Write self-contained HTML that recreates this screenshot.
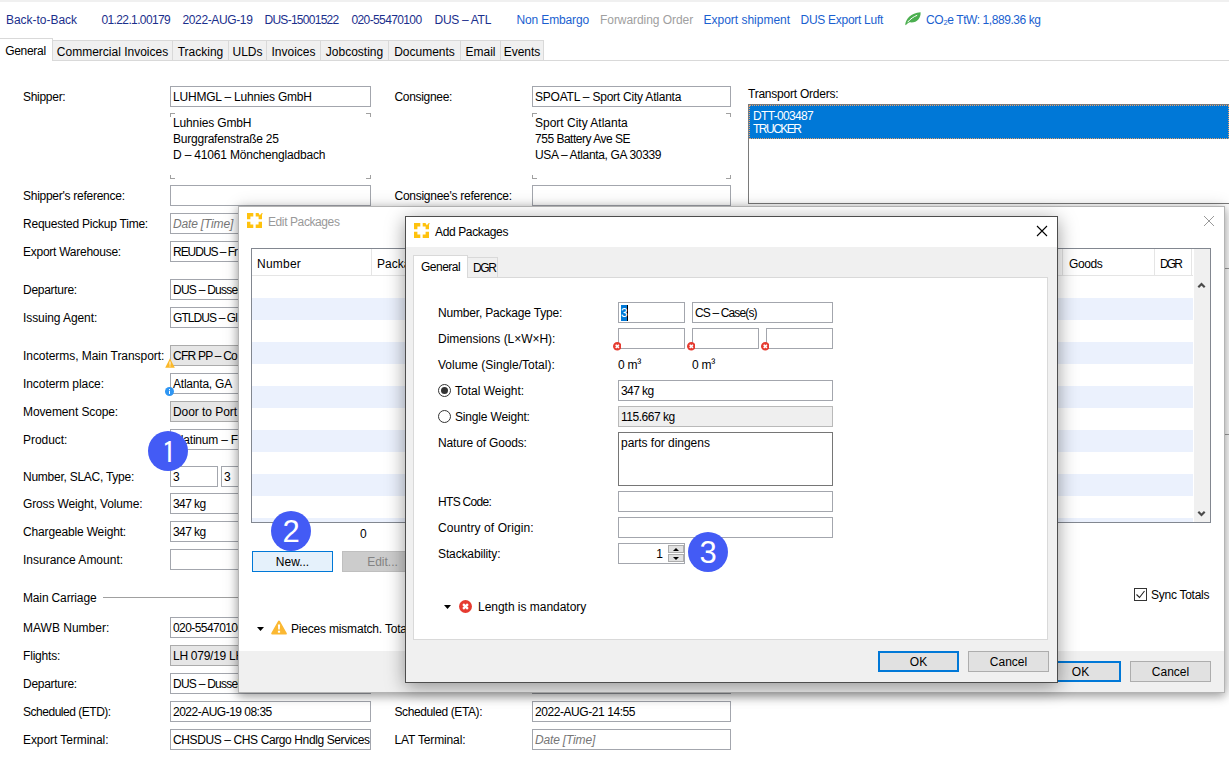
<!DOCTYPE html>
<html><head><meta charset="utf-8"><title>Shipment</title>
<style>
*{box-sizing:border-box}
html,body{margin:0;padding:0}
body{width:1229px;height:761px;overflow:hidden;background:#fff;position:relative;font:12px/14px "Liberation Sans",sans-serif;color:#000}
.a{position:absolute;white-space:nowrap}
.t{position:absolute;white-space:nowrap;height:14px;line-height:14px}
.in{position:absolute;height:21px;border:1px solid #a3a6ad;background:#fff;padding:0 0 0 2px;line-height:20px;white-space:nowrap;overflow:hidden}
.in.g{background:#e6e6e6;border-color:#ababab}
.in.ph{color:#767676;font-style:italic}
.nv{color:#1b2f8c}
.lk{color:#1a5fd0}
.tab{position:absolute;top:40px;height:21px;background:#f0f0f0;border:1px solid #d9d9d9;border-left:none;line-height:22px;text-align:center}
.btn{position:absolute;height:21px;border:1px solid #adadad;background:#e1e1e1;text-align:center;line-height:21px}
.circ{position:absolute;width:40px;height:40px;border-radius:50%;background:#435bf5;color:#fff;font-size:31px;line-height:42px;text-align:center}
</style></head><body>
<div id="hdr">
<div class="a" style="left:0;top:0;width:1229px;height:2px;background:#f0f0f0"></div>
<span class="t nv" style="left:6px;top:13px;letter-spacing:-0.03px;">Back-to-Back</span>
<span class="t nv" style="left:101.5px;top:13px;letter-spacing:-0.63px;">01.22.1.00179</span>
<span class="t nv" style="left:182.5px;top:13px;letter-spacing:-0.37px;">2022-AUG-19</span>
<span class="t nv" style="left:264.5px;top:13px;letter-spacing:-0.73px;">DUS-15001522</span>
<span class="t nv" style="left:351.5px;top:13px;letter-spacing:-0.57px;letter-spacing:-0.62px;">020-55470100</span>
<span class="t nv" style="left:434.5px;top:13px;letter-spacing:-0.29px;">DUS – ATL</span>
<span class="t lk" style="left:516.5px;top:13px;letter-spacing:-0.14px;">Non Embargo</span>
<span class="t " style="left:600px;top:13px;letter-spacing:-0.06px;color:#a0a0a0;">Forwarding Order</span>
<span class="t lk" style="left:703.5px;top:13px;letter-spacing:-0.01px;">Export shipment</span>
<span class="t lk" style="left:800.5px;top:13px;letter-spacing:-0.28px;">DUS Export Luft</span>
<span class="t lk" style="left:926px;top:13px;letter-spacing:-0.43px;">CO₂e TtW: 1,889.36 kg</span>
<svg class="a" style="left:904px;top:11px" width="18" height="15" viewBox="0 0 18 15"><path d="M1.2 13.6C2.200 7.500 6.500 2.500 16.6 1.300 16.900 7.800 12.500 12.300 5.600 11.300 4.200 11.900 2.800 13 1.900 14.200z" fill="#4caf50"/><path d="M3.600 11.200C6.500 7.800 9.800 5.600 13.200 4.300" stroke="#fff" stroke-width="1" fill="none"/></svg>
<div class="a" style="left:0;top:60px;width:1229px;height:1px;background:#d9d9d9"></div>
<div class="tab" style="left:-1px;top:38px;width:54px;height:23px;background:#fff;border-left:1px solid #d9d9d9;border-bottom:none;line-height:24px;letter-spacing:-0.3px;padding-right:1px">General</div>
<div class="tab" style="left:53px;width:120px">Commercial Invoices</div>
<div class="tab" style="left:173px;width:56px">Tracking</div>
<div class="tab" style="left:229px;width:38px">ULDs</div>
<div class="tab" style="left:267px;width:54px">Invoices</div>
<div class="tab" style="left:321px;width:68px">Jobcosting</div>
<div class="tab" style="left:389px;width:72px">Documents</div>
<div class="tab" style="left:461px;width:40px">Email</div>
<div class="tab" style="left:501px;width:43px">Events</div>
</div>
<div id="form">
<span class="t " style="left:23px;top:90px;letter-spacing:-0.286px;">Shipper:</span>
<div class="in " style="left:170px;top:86px;width:201px;letter-spacing:-0.198px;">LUHMGL – Luhnies GmbH</div>
<span class="t " style="left:23px;top:189px;letter-spacing:-0.264px;">Shipper's reference:</span>
<div class="in " style="left:170px;top:185px;width:201px;"></div>
<span class="t " style="left:23px;top:217px;letter-spacing:-0.232px;">Requested Pickup Time:</span>
<div class="in ph" style="left:170px;top:213px;width:201px;letter-spacing:-0.162px;">Date [Time]</div>
<span class="t " style="left:23px;top:245px;letter-spacing:-0.255px;">Export Warehouse:</span>
<div class="in " style="left:170px;top:241px;width:201px;letter-spacing:-1.03px;">REUDUS – Fr</div>
<span class="t " style="left:23px;top:283px;letter-spacing:-0.278px;">Departure:</span>
<div class="in " style="left:170px;top:279px;width:201px;letter-spacing:-0.75px;">DUS – Dusseldorf</div>
<span class="t " style="left:23px;top:311px;letter-spacing:-0.084px;">Issuing Agent:</span>
<div class="in " style="left:170px;top:307px;width:201px;letter-spacing:-0.91px;">GTLDUS – Gl</div>
<span class="t " style="left:23px;top:349px;letter-spacing:-0.057px;">Incoterms, Main Transport:</span>
<div class="in g" style="left:170px;top:345px;width:201px;letter-spacing:-0.77px;">CFR PP – Co</div>
<span class="t " style="left:23px;top:377px;letter-spacing:-0.075px;">Incoterm place:</span>
<div class="in " style="left:170px;top:373px;width:201px;letter-spacing:-0.217px;">Atlanta, GA</div>
<span class="t " style="left:23px;top:405px;letter-spacing:-0.108px;">Movement Scope:</span>
<div class="in g" style="left:170px;top:401px;width:201px;letter-spacing:-0.06px;">Door to Port</div>
<span class="t " style="left:23px;top:433px;letter-spacing:-0.043px;">Product:</span>
<div class="in " style="left:170px;top:429px;width:201px;letter-spacing:-0.2px;">Platinum – F</div>
<span class="t " style="left:23px;top:497px;letter-spacing:-0.15px;">Gross Weight, Volume:</span>
<div class="in " style="left:170px;top:493px;width:201px;letter-spacing:-0.566px;">347 kg</div>
<span class="t " style="left:23px;top:525px;letter-spacing:-0.156px;">Chargeable Weight:</span>
<div class="in " style="left:170px;top:521px;width:201px;letter-spacing:-0.566px;">347 kg</div>
<span class="t " style="left:23px;top:553px;">Insurance Amount:</span>
<div class="in " style="left:170px;top:549px;width:201px;"></div>
<span class="t " style="left:23px;top:621px;">MAWB Number:</span>
<div class="in " style="left:170px;top:617px;width:201px;letter-spacing:-0.57px;">020-55470100</div>
<span class="t " style="left:23px;top:649px;letter-spacing:-0.184px;">Flights:</span>
<div class="in g" style="left:170px;top:645px;width:201px;letter-spacing:-0.27px;">LH 079/19 LH</div>
<span class="t " style="left:23px;top:677px;letter-spacing:-0.278px;">Departure:</span>
<div class="in " style="left:170px;top:673px;width:201px;letter-spacing:-0.75px;">DUS – Dusseldorf</div>
<span class="t " style="left:23px;top:705px;letter-spacing:-0.478px;">Scheduled (ETD):</span>
<div class="in " style="left:170px;top:701px;width:201px;letter-spacing:-0.507px;">2022-AUG-19 08:35</div>
<span class="t " style="left:23px;top:733px;letter-spacing:-0.066px;">Export Terminal:</span>
<div class="in " style="left:170px;top:729px;width:201px;letter-spacing:-0.388px;">CHSDUS – CHS Cargo Hndlg Services</div>
<span class="t " style="left:23px;top:470px;letter-spacing:-0.252px;">Number, SLAC, Type:</span>
<div class="in" style="left:170px;top:466px;width:48px">3</div>
<div class="in" style="left:221px;top:466px;width:48px">3</div>
<span class="t " style="left:173px;top:116px;letter-spacing:-0.141px;">Luhnies GmbH</span>
<span class="t " style="left:173px;top:132px;letter-spacing:-0.226px;">Burggrafenstraße 25</span>
<span class="t " style="left:173px;top:148px;letter-spacing:-0.179px;">D – 41061 Mönchengladbach</span>
<div class="a" style="left:170px;top:113px;width:5px;height:4px;border-left:1px solid #a0a0a0;border-top:1px solid #a0a0a0"></div>
<div class="a" style="left:366px;top:113px;width:5px;height:4px;border-right:1px solid #a0a0a0;border-top:1px solid #a0a0a0"></div>
<div class="a" style="left:170px;top:175px;width:5px;height:4px;border-left:1px solid #a0a0a0;border-bottom:1px solid #a0a0a0"></div>
<div class="a" style="left:366px;top:175px;width:5px;height:4px;border-right:1px solid #a0a0a0;border-bottom:1px solid #a0a0a0"></div>
<span class="t " style="left:535px;top:116px;">Sport City Atlanta</span>
<span class="t " style="left:535px;top:132px;letter-spacing:-0.486px;">755 Battery Ave SE</span>
<span class="t " style="left:535px;top:148px;letter-spacing:-0.346px;">USA – Atlanta, GA 30339</span>
<div class="a" style="left:532px;top:113px;width:5px;height:4px;border-left:1px solid #a0a0a0;border-top:1px solid #a0a0a0"></div>
<div class="a" style="left:726px;top:113px;width:5px;height:4px;border-right:1px solid #a0a0a0;border-top:1px solid #a0a0a0"></div>
<div class="a" style="left:532px;top:175px;width:5px;height:4px;border-left:1px solid #a0a0a0;border-bottom:1px solid #a0a0a0"></div>
<div class="a" style="left:726px;top:175px;width:5px;height:4px;border-right:1px solid #a0a0a0;border-bottom:1px solid #a0a0a0"></div>
<span class="t " style="left:23px;top:591px;letter-spacing:-0.148px;">Main Carriage</span>
<div class="a" style="left:103px;top:597px;width:640px;height:1px;background:#a0a0a0"></div>
<span class="t " style="left:394.5px;top:90px;letter-spacing:-0.313px;">Consignee:</span>
<div class="in " style="left:532px;top:86px;width:199px;letter-spacing:-0.218px;">SPOATL – Sport City Atlanta</div>
<span class="t " style="left:394.5px;top:189px;letter-spacing:-0.263px;">Consignee's reference:</span>
<div class="in " style="left:532px;top:185px;width:199px;"></div>
<div class="in " style="left:532px;top:673px;width:199px;"></div>
<span class="t " style="left:394.5px;top:705px;letter-spacing:-0.389px;">Scheduled (ETA):</span>
<div class="in " style="left:532px;top:701px;width:199px;letter-spacing:-0.432px;">2022-AUG-21 14:55</div>
<span class="t " style="left:394.5px;top:733px;letter-spacing:-0.142px;">LAT Terminal:</span>
<div class="in ph" style="left:532px;top:729px;width:199px;letter-spacing:-0.162px;">Date [Time]</div>
<span class="t " style="left:748px;top:87px;letter-spacing:-0.234px;">Transport Orders:</span>
<div class="a" style="left:748px;top:104px;width:490px;height:100px;border:1px solid #7a7a7a;background:#fff"></div>
<div class="a" style="left:749px;top:105px;width:480px;height:34px;background:#0078d7;border:1px dotted #e8a06a;color:#fff;font-size:12px;line-height:13px;padding:4px 0 0 3px"><span style="letter-spacing:-0.66px">DTT-003487</span><br><span style="letter-spacing:-1.5px">TRUCKER</span></div>
<svg class="a" style="left:165px;top:358px" width="10" height="10" viewBox="0 0 10 10"><path d="M5 0.300L9.800 9.700H0.200z" fill="#fbb829"/><path d="M4.500 3.500h1v3.300h-1zM4.500 7.500h1v1h-1z" fill="#fff"/></svg>
<svg class="a" style="left:165px;top:387px" width="9" height="9" viewBox="0 0 9 9"><circle cx="4.500" cy="4.500" r="4.500" fill="#2f96f3"/><path d="M4 3.800h1v3.200h-1zM4 2h1v1h-1z" fill="#fff"/></svg>
<div class="a" style="left:1225px;top:268px;width:4px;height:1px;background:#a0a0a0"></div>
<div class="a" style="left:1225px;top:434px;width:4px;height:1px;background:#a0a0a0"></div>
</div>
<div id="dlg1">
<div class="a" style="left:238px;top:206px;width:987px;height:487px;background:#fff;border:1px solid #b4b4b4;box-shadow:0 3px 9px rgba(0,0,0,.33),0 0 16px rgba(0,0,0,.14)"></div>
<div class="a" style="left:239px;top:651px;width:985px;height:41px;background:#f0f0f0"></div>
<svg class="a" style="left:247px;top:213px" width="16" height="15" viewBox="0 0 16 15"><path fill="#ffc20e" d="M0 0h6.300v3.400h-2.900v2.900h-3.400zM0 8.700h3.400v2.900h2.900v3.400h-6.300zM8.700 11.600h2.900v-2.900h3.400v6.300h-6.300zM8.700 0h2.800l1.300 2.300 2-2.300h.9l-.7 2v4.300h-3.400v-2.900h-2.900z"/></svg>
<span class="t " style="left:268px;top:215px;letter-spacing:-0.402px;color:#999">Edit Packages</span>
<svg class="a" style="left:1203px;top:215px" width="12" height="12" viewBox="0 0 12 12"><path d="M1 1l10 10M11 1l-10 10" stroke="#999" stroke-width="1" fill="none"/></svg>
<div class="a" style="left:251px;top:248px;width:960px;height:275px;border:1px solid #828790;background:#fff;overflow:hidden"><div class="a" style="left:942px;top:0;width:16px;height:273px;background:#f0f0f0"></div><div class="a" style="left:0;top:49px;width:941px;height:22px;background:#ebf1fd"></div><div class="a" style="left:0;top:93px;width:941px;height:22px;background:#ebf1fd"></div><div class="a" style="left:0;top:137px;width:941px;height:22px;background:#ebf1fd"></div><div class="a" style="left:0;top:181px;width:941px;height:22px;background:#ebf1fd"></div><div class="a" style="left:0;top:225px;width:941px;height:22px;background:#ebf1fd"></div><div class="a" style="left:0;top:269px;width:941px;height:22px;background:#ebf1fd"></div><div class="a" style="left:0;top:0;width:941px;height:27px;background:#fff;border-bottom:1px solid #e5e5e5"></div><div class="a" style="left:119px;top:0;width:1px;height:26px;background:#e5e5e5"></div><div class="a" style="left:810px;top:0;width:1px;height:26px;background:#e5e5e5"></div><div class="a" style="left:902px;top:0;width:1px;height:26px;background:#e5e5e5"></div><div class="a" style="left:939px;top:0;width:1px;height:26px;background:#e5e5e5"></div><span class="t " style="left:5px;top:8px;letter-spacing:0.222px;">Number</span><span class="t " style="left:125px;top:8px;">Package Type</span><span class="t " style="left:817px;top:8px;letter-spacing:-0.415px;">Goods</span><span class="t " style="left:908px;top:8px;letter-spacing:-1.886px;">DGR</span><svg class="a" style="left:945px;top:32px" width="9" height="8" viewBox="0 0 9 8"><path d="M1.300 6.200L4.500 3 7.700 6.200" stroke="#4a4a4a" stroke-width="2.200" fill="none"/></svg><svg class="a" style="left:945px;top:261px" width="9" height="8" viewBox="0 0 9 8"><path d="M1.300 1.800L4.500 5 7.700 1.800" stroke="#4a4a4a" stroke-width="2.200" fill="none"/></svg></div>
<span class="t " style="left:360px;top:527px;">0</span>
<div class="btn" style="left:252px;top:551px;width:81px;border-color:#0078d7;background:#e5f1fb">New...</div>
<div class="btn" style="left:342px;top:551px;width:81px;background:#cccccc;border-color:#bfbfbf;color:#838383">Edit...</div>
<svg class="a" style="left:257px;top:627px" width="7" height="4" viewBox="0 0 7 4"><path d="M0 0h7l-3.500 4z" fill="#000"/></svg>
<svg class="a" style="left:271px;top:620px" width="16" height="15" viewBox="0 0 16 15"><path d="M8 1.600L14.800 13.600H1.200z" fill="#fbb832" stroke="#fbb832" stroke-width="2" stroke-linejoin="round"/><path d="M6.900 4.600h2.200l-.3 5H7.200z" fill="#fff"/><rect x="6.900" y="10.700" width="2.200" height="2" fill="#fff"/></svg>
<span class="t " style="left:291px;top:622px;letter-spacing:-0.19px">Pieces mismatch. Total</span>
<div class="a" style="left:1134px;top:588px;width:13px;height:13px;border:1px solid #333;background:#fff"></div>
<svg class="a" style="left:1135px;top:589px" width="11" height="11" viewBox="0 0 11 11"><path d="M1.500 5.500l3 3 5-6.500" stroke="#222" stroke-width="1.100" fill="none"/></svg>
<span class="t " style="left:1151px;top:588px;letter-spacing:-0.266px;">Sync Totals</span>
<div class="btn" style="left:1040px;top:661px;width:81px;border:2px solid #0078d7;line-height:19px;background:#e1e1e1">OK</div>
<div class="btn" style="left:1130px;top:661px;width:81px">Cancel</div>
</div>
<div id="dlg2">
<div class="a" style="left:405px;top:216px;width:653px;height:467px;background:#f0f0f0;border:1px solid #4d4d4d;box-shadow:0 4px 18px rgba(0,0,0,.4)"></div>
<div class="a" style="left:406px;top:217px;width:651px;height:30px;background:#fff"></div>
<svg class="a" style="left:414px;top:223px" width="16" height="15" viewBox="0 0 16 15"><path fill="#ffc20e" d="M0 0h6.300v3.400h-2.900v2.900h-3.400zM0 8.700h3.400v2.900h2.900v3.400h-6.300zM8.700 11.600h2.900v-2.900h3.400v6.300h-6.300zM8.700 0h2.800l1.300 2.300 2-2.300h.9l-.7 2v4.300h-3.400v-2.900h-2.900z"/></svg>
<span class="t " style="left:435px;top:225px;letter-spacing:-0.363px;">Add Packages</span>
<svg class="a" style="left:1036px;top:225px" width="12" height="12" viewBox="0 0 12 12"><path d="M1 1l10 10M11 1l-10 10" stroke="#000" stroke-width="1.100" fill="none"/></svg>
<div class="a" style="left:413px;top:277px;width:635px;height:363px;background:#fff;border:1px solid #d9d9d9"></div>
<div class="a" style="left:413px;top:255px;width:55px;height:23px;background:#fff;border:1px solid #d9d9d9;border-bottom:none;padding-left:7px;line-height:22px;letter-spacing:-0.5px">General</div>
<div class="a" style="left:468px;top:257px;width:30px;height:21px;background:#f0f0f0;border:1px solid #d9d9d9;border-left:none;padding-left:5px;line-height:20px;letter-spacing:-1.4px">DGR</div>
<span class="t " style="left:438px;top:306px;letter-spacing:-0.178px;">Number, Package Type:</span>
<span class="t " style="left:438px;top:332px;letter-spacing:-0.035px;">Dimensions (L×W×H):</span>
<span class="t " style="left:438px;top:358px;">Volume (Single/Total):</span>
<span class="t " style="left:438px;top:436px;letter-spacing:-0.166px;">Nature of Goods:</span>
<span class="t " style="left:438px;top:495px;letter-spacing:-0.682px;">HTS Code:</span>
<span class="t " style="left:438px;top:521px;letter-spacing:0.091px;">Country of Origin:</span>
<span class="t " style="left:438px;top:547px;letter-spacing:-0.128px;">Stackability:</span>
<span class="t " style="left:455px;top:384px;">Total Weight:</span>
<span class="t " style="left:455px;top:410px;letter-spacing:-0.174px;">Single Weight:</span>
<div class="a" style="left:438px;top:384px;width:13px;height:13px;border:1px solid #333;border-radius:50%;background:#fff"></div><div class="a" style="left:441px;top:387px;width:7px;height:7px;border-radius:50%;background:#333"></div>
<div class="a" style="left:438px;top:410px;width:13px;height:13px;border:1px solid #333;border-radius:50%;background:#fff"></div>
<div class="in" style="left:618px;top:302px;width:67px"><span style="background:#0078d7;color:#fff;display:inline-block;height:16px;line-height:16px;margin-top:1px;border-right:1px solid #000;letter-spacing:-0.7px">3</span></div>
<div class="in " style="left:692px;top:302px;width:141px;letter-spacing:-0.857px;">CS – Case(s)</div>
<div class="in" style="left:618px;top:328px;width:67px"></div>
<svg class="a" style="left:612.7px;top:342.4px" width="8.600" height="8.600" viewBox="0 0 8.600 8.600"><circle cx="4.300" cy="4.300" r="4.300" fill="#e63b30"/><path d="M2.700 2.700l3.200 3.200M5.900 2.700l-3.200 3.200" stroke="#fff" stroke-width="1.600" fill="none"/></svg>
<div class="in" style="left:692px;top:328px;width:67px"></div>
<svg class="a" style="left:686.7px;top:342.4px" width="8.600" height="8.600" viewBox="0 0 8.600 8.600"><circle cx="4.300" cy="4.300" r="4.300" fill="#e63b30"/><path d="M2.700 2.700l3.200 3.200M5.900 2.700l-3.200 3.200" stroke="#fff" stroke-width="1.600" fill="none"/></svg>
<div class="in" style="left:766px;top:328px;width:67px"></div>
<svg class="a" style="left:760.7px;top:342.4px" width="8.600" height="8.600" viewBox="0 0 8.600 8.600"><circle cx="4.300" cy="4.300" r="4.300" fill="#e63b30"/><path d="M2.700 2.700l3.200 3.200M5.900 2.700l-3.200 3.200" stroke="#fff" stroke-width="1.600" fill="none"/></svg>
<span class="t " style="left:618px;top:358px;letter-spacing:-0.233px;">0 m<span style="position:relative;top:-2px">³</span></span><span class="t " style="left:692px;top:358px;letter-spacing:-0.233px;">0 m<span style="position:relative;top:-2px">³</span></span>
<div class="in " style="left:618px;top:380px;width:215px;letter-spacing:-0.566px;">347 kg</div>
<div class="in " style="left:618px;top:406px;width:215px;letter-spacing:-0.478px;background:#efefef;border-color:#b9b9b9;">115.667 kg</div>
<div class="in " style="left:618px;top:432px;width:215px;letter-spacing:-0.031px;height:54px;border-color:#767676;">parts for dingens</div>
<div class="in" style="left:618px;top:491px;width:215px"></div>
<div class="in" style="left:618px;top:517px;width:215px"></div>
<div class="in" style="left:618px;top:543px;width:67px;text-align:right;padding-right:21px">1</div>
<div class="a" style="left:668px;top:545px;width:16px;height:8px;background:#e1e1e1;border:1px solid #adadad"></div><div class="a" style="left:668px;top:554px;width:16px;height:8px;background:#e1e1e1;border:1px solid #adadad"></div>
<svg class="a" style="left:673px;top:548px" width="6" height="3" viewBox="0 0 6 3"><path d="M0 3h6l-3-3z"/></svg><svg class="a" style="left:673px;top:557px" width="6" height="3" viewBox="0 0 6 3"><path d="M0 0h6l-3 3z"/></svg>
<svg class="a" style="left:444px;top:605px" width="7" height="4" viewBox="0 0 7 4"><path d="M0 0h7l-3.500 4z" fill="#000"/></svg>
<svg class="a" style="left:459px;top:600px" width="13" height="13" viewBox="0 0 13 13"><circle cx="6.500" cy="6.500" r="6.500" fill="#e63b30"/><path d="M4.100 4.100l4.800 4.800M8.900 4.100l-4.800 4.800" stroke="#fff" stroke-width="2.300"/></svg>
<span class="t " style="left:478px;top:600px;letter-spacing:-0.024px;">Length is mandatory</span>
<div class="btn" style="left:878px;top:651px;width:81px;border:2px solid #0078d7;line-height:19px;background:#e1e1e1">OK</div>
<div class="btn" style="left:968px;top:651px;width:81px">Cancel</div>
</div>
<div id="marks">
<div class="circ" style="left:148px;top:431px;font:30px/43px 'IPAGothic','Liberation Sans',sans-serif;padding-left:2px;">1</div>
<div class="circ" style="left:271px;top:511px;">2</div>
<div class="circ" style="left:688px;top:532px;">3</div>
</div>
</body></html>
